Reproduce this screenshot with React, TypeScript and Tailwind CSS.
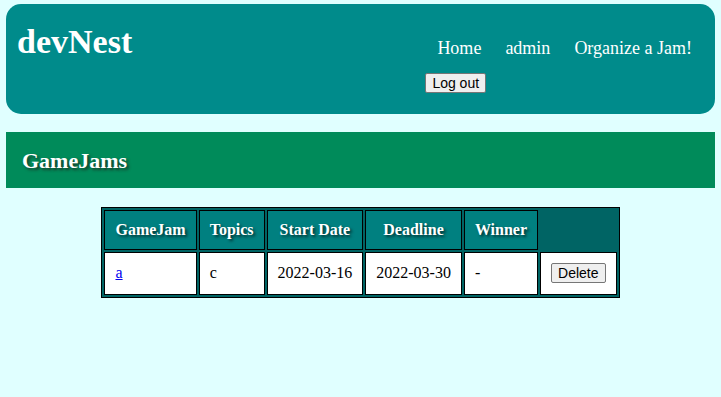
import React from "react";

const jams = [
    { name: "a", topics: "c", start: "2022-03-16", deadline: "2022-03-30", winner: "-" },
];

const serif = "font-['Liberation_Serif',serif]";
const btn =
    "font-['Liberation_Sans',Arial,sans-serif] text-[14px] leading-[16px] text-black bg-[#efefef] border border-[#767676] rounded-[2px] px-[6px] py-[1px]";

export default function App() {
    return (
        <div className={`min-h-[397px] bg-[#e0ffff] pt-1 px-[6px] ${serif}`}>
            <header className="flex justify-between h-[110px] bg-[#008b8b] rounded-[15px] pl-[11px] pr-[11px] text-white">
                <h1 className="mt-[19px] text-[34px] font-bold leading-[38px]">devNest</h1>
                <div className="flex flex-col items-start pt-[34px]">
                    <nav className="flex text-[18px] leading-[20px]">
                        <a className="mx-3">Home</a>
                        <a className="mx-3">admin</a>
                        <a className="mx-3">Organize a Jam!</a>
                    </nav>
                    <button className={`${btn} mt-[15px]`}>Log out</button>
                </div>
            </header>

            <div className="mt-[18px] h-[56px] bg-[#008b5a] flex items-center pl-4">
                <h2 className="text-[22px] font-bold text-white [text-shadow:2px_2px_3px_#1a3a2a]">GameJams</h2>
            </div>

            <table className="mx-auto mt-[19px] border border-black bg-[#006464] border-separate border-spacing-[2px] text-[16px] leading-[18px]">
                <thead>
                    <tr>
                        {["GameJam", "Topics", "Start Date", "Deadline", "Winner"].map((h) => (
                            <th
                                key={h}
                                className="border border-black bg-[#008080] p-[10px] font-bold text-white text-center [text-shadow:2px_2px_3px_#003030]"
                            >
                                {h}
                            </th>
                        ))}
                        <th className="p-0"></th>
                    </tr>
                </thead>
                <tbody>
                    {jams.map((j) => (
                        <tr key={j.name}>
                            <td className="border border-black bg-white p-[10px] pb-[11px] text-left">
                                <a href="#" className="text-[#0000ee] underline">{j.name}</a>
                            </td>
                            <td className="border border-black bg-white p-[10px] pb-[11px]">{j.topics}</td>
                            <td className="border border-black bg-white p-[10px] pb-[11px]">{j.start}</td>
                            <td className="border border-black bg-white p-[10px] pb-[11px]">{j.deadline}</td>
                            <td className="border border-black bg-white p-[10px] pb-[11px]">{j.winner}</td>
                            <td className="border border-black bg-white p-[10px] pb-[11px]">
                                <button className={btn}>Delete</button>
                            </td>
                        </tr>
                    ))}
                </tbody>
            </table>
        </div>
    );
}
